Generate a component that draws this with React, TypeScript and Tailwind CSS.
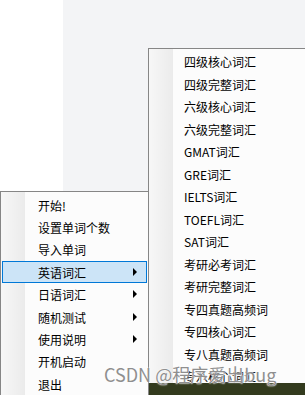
import React from "react";

const mainItems: { label: string; sub?: boolean; active?: boolean }[] = [
  { label: "开始!" },
  { label: "设置单词个数" },
  { label: "导入单词" },
  { label: "英语词汇", sub: true, active: true },
  { label: "日语词汇", sub: true },
  { label: "随机测试", sub: true },
  { label: "使用说明", sub: true },
  { label: "开机启动" },
  { label: "退出" },
];

const subItems = [
  "四级核心词汇",
  "四级完整词汇",
  "六级核心词汇",
  "六级完整词汇",
  "GMAT词汇",
  "GRE词汇",
  "IELTS词汇",
  "TOEFL词汇",
  "SAT词汇",
  "考研必考词汇",
  "考研完整词汇",
  "专四真题高频词",
  "专四核心词汇",
  "专八真题高频词",
  "专八核心词汇",
];

const font = "font-['Microsoft_YaHei','Noto_Sans_CJK_SC',sans-serif]";

const Arrow = () => (
  <svg width="5" height="8" viewBox="0 0 5 8" className="shrink-0">
    <polygon points="0,0 4,4 0,8" fill="#000" />
  </svg>
);

const App: React.FC = () => {
  return (
    <div className={`relative w-[305px] h-[395px] overflow-hidden flex bg-[#f3f4f6] ${font}`}>
      {/* main context menu column */}
      <div className="w-[148px] flex flex-col">
        <div className="h-[197px] flex">
          <div className="w-[63px] bg-white" />
          <div className="flex-1" />
        </div>
        <div className="relative flex-1 bg-[#fcfcfc] border-t border-l border-[#868686]">
          <div className="absolute left-0 top-0 bottom-0 w-[24px] bg-gradient-to-r from-[#f7f7f7] to-[#ebebeb]" />
          <div className="relative pt-[1px]">
            {mainItems.map((it) => (
              <div
                key={it.label}
                className={`h-[22.4px] mx-[1px] flex items-center justify-between pl-[35px] pr-[8px] text-[12px] text-black border ${
                  it.active ? "bg-[#cce4f7] border-[#0078d7]" : "border-transparent"
                }`}
              >
                <span className="leading-none pt-[2px]">{it.label}</span>
                {it.sub && <Arrow />}
              </div>
            ))}
          </div>
        </div>
      </div>

      {/* submenu column */}
      <div className="flex-1 flex flex-col">
        <div className="h-[48px]" />
        <div className="relative h-[335px] overflow-hidden bg-[#fcfcfc] border-t border-l border-[#868686]">
          <div className="absolute left-0 top-0 bottom-0 w-[24px] bg-gradient-to-r from-[#f7f7f7] to-[#ebebeb]" />
          <div className="relative pt-[2px]">
            {subItems.map((s) => (
              <div key={s} className="h-[22.5px] flex items-center pl-[35px] text-[12px] text-black">
                <span className="leading-none">{s}</span>
              </div>
            ))}
          </div>
        </div>
        <div className="flex-1 bg-[#333b1e] border-l border-[#868686]" />
      </div>

      {/* watermark */}
      <div className="absolute left-[104px] top-[365px] text-[18px] leading-none text-[#8f8f8f] [text-shadow:0_0_1px_#fff,0_0_2px_#fff] whitespace-nowrap">
        CSDN @程序爱出bug
      </div>
    </div>
  );
};

export default App;
